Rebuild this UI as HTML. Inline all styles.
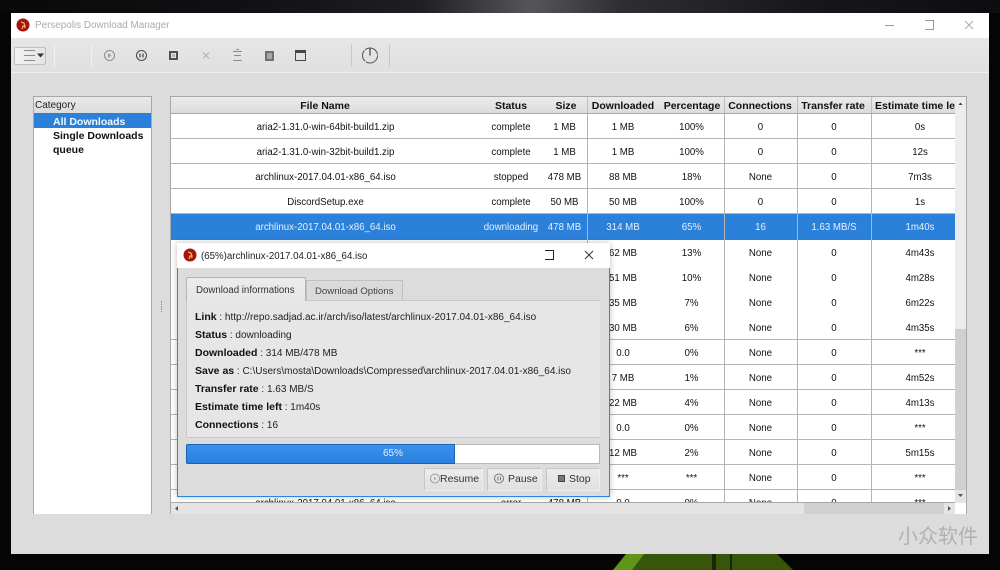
<!DOCTYPE html>
<html><head><meta charset="utf-8">
<style>
html,body{margin:0;padding:0}
body{width:1000px;height:570px;overflow:hidden;position:relative;background:#050506;font-family:"Liberation Sans","Noto Sans CJK SC",sans-serif;font-size:10px;color:#111}
.a{position:absolute;box-sizing:border-box}
.t{position:absolute;white-space:nowrap;line-height:14px}
table{border-collapse:separate;border-spacing:0;table-layout:fixed;position:absolute;left:0;top:0;width:798px}
td{height:25px;padding:3px 0 0;text-align:center;vertical-align:top;white-space:nowrap;overflow:hidden;box-sizing:border-box;border-bottom:1px solid #b4b4b4;line-height:21px;font-size:9.7px}
tr.n td{border-bottom:0}
tr.s td{background:#2b80d9;color:#e8f0fa;border-bottom:0;height:26px}
.v{position:absolute;top:0;width:1px;background:#b4b4b4}
.h{position:absolute;top:98px;font-weight:bold;font-size:10.5px;line-height:15px;white-space:nowrap;transform:translateX(-50%);color:#111}
.sep{position:absolute;top:44px;width:1px;height:23px;background:#f2f2f2}
.l{position:absolute;left:195px;white-space:nowrap;line-height:14px;font-size:10px;color:#222}
.l b{color:#111;font-size:10.5px}
.btn{position:absolute;top:468px;height:23px;background:linear-gradient(#ececec,#e0e0e0);border:1px solid #c6c6c6;border-bottom-color:#eee;border-right-color:#eee;box-sizing:border-box;text-align:left;line-height:21px;font-size:10.5px;color:#333}
</style></head><body>

<!-- backdrop -->
<div class="a" style="left:0;top:0;width:1000px;height:13px;background:linear-gradient(90deg,#08090a 0,#101114 25%,#1d1f22 42%,#55565c 53%,#2d2f33 62%,#16181b 80%,#0c0d10 100%)"></div>
<svg class="a" style="left:560px;top:554px" width="300" height="16"><polygon points="53,16 67,0 217,0 233,16" fill="#37560c"/><polygon points="53,16 66,0 84,0 72,16" fill="#5f9519"/><rect x="152" y="0" width="4" height="16" fill="#1c2508"/><rect x="170" y="0" width="2" height="16" fill="#1c2508"/></svg>

<!-- main window -->
<div class="a" style="left:11px;top:13px;width:978px;height:541px;background:#dcdcdc"></div>
<div class="a" style="left:11px;top:13px;width:978px;height:25px;background:#fff"></div>
<div class="a" style="left:11px;top:38px;width:978px;height:35px;background:linear-gradient(#e6e6e6,#e0e0e0);border-bottom:1px solid #efefef"></div>

<svg class="a" style="left:16px;top:18px" width="14" height="14"><circle cx="7" cy="7" r="6.5" fill="#a5140f"/><path d="M5 4l3 1 1 3-2 0-1 3M8 8l1 2" stroke="#e8b060" stroke-width="1.3" fill="none"/></svg>
<div class="t" style="left:35px;top:19px;color:#a3adb4;font-size:9.9px">Persepolis Download Manager</div>

<svg class="a" style="left:880px;top:17px" width="100" height="16"><path d="M5 8.5h9" stroke="#999"/><path d="M45 3.5h8.500v9H45" stroke="#999" fill="none"/><path d="M85 4l8 8M93 4l-8 8" stroke="#aaa" fill="none"/></svg>

<!-- toolbar -->
<div class="a" style="left:14px;top:47px;width:32px;height:18px;background:linear-gradient(90deg,#f2f2f2,#e4e4e4);border:1px solid #c0c0c0;border-radius:2px"></div>
<svg class="a" style="left:14px;top:47px" width="400" height="20">
<path d="M10 3.500h11M10 8.500h11M10 13.500h11" stroke="#8b8b8b"/>
<path d="M23 6.500h7l-3.500 4z" fill="#333"/>
</svg>
<div class="sep" style="left:54px"></div><div class="sep" style="left:91px"></div>
<svg class="a" style="left:100px;top:44px" width="300" height="24">
<circle cx="9.500" cy="11.500" r="5" fill="none" stroke="#8f8f8f"/><path d="M8 9l3.500 2.500L8 14z" fill="#999"/>
<circle cx="41.500" cy="11.500" r="5" fill="none" stroke="#4c4f56" stroke-width="1.100"/><path d="M40 9.500v4M43 9.500v4" stroke="#4c4f56" stroke-width="1.300"/>
<rect x="70" y="8" width="7" height="7" fill="none" stroke="#4b4e56" stroke-width="2"/><rect x="72" y="10" width="3" height="3" fill="#4b4e56" opacity=".3"/>
<path d="M103 8.500l6 6M109 8.500l-6 6" stroke="#b0b0b0"/>
<path d="M133 7.500h9M134 11.500h7M133 16.500h9M136 5.500h3" stroke="#8c8c8c"/>
<rect x="165" y="7" width="9" height="10" fill="#6e7078"/><path d="M167 10h5M167 12h5M167 14h5" stroke="#dcdcdc"/>
<rect x="195.500" y="6.500" width="10" height="10" fill="none" stroke="#44474e"/><rect x="195" y="6" width="11" height="3" fill="#44474e"/>
</svg>
<div class="sep" style="left:351px;background:#c8c8c8"></div><div class="sep" style="left:389px;background:#c8c8c8"></div>
<svg class="a" style="left:360px;top:45px" width="20" height="20"><circle cx="10" cy="10.500" r="7.500" fill="none" stroke="#555" stroke-dasharray="16 1 12 1"/><path d="M10 2.500v8" stroke="#444" stroke-width="1.200"/></svg>

<!-- category -->
<div class="a" style="left:33px;top:96px;width:119px;height:418px;background:#fff;border:1px solid #a8a8a8;border-bottom:0"></div>
<div class="a" style="left:34px;top:97px;width:117px;height:16px;background:linear-gradient(#eaeaea,#dcdcdc)"></div>
<div class="t" style="left:35px;top:99px;color:#222;font-size:10px">Category</div>
<div class="a" style="left:34px;top:113px;width:117px;height:15px;background:#2b80d9"></div>
<div class="t" style="left:53px;top:115px;color:#f4f8fd;font-weight:bold;font-size:10.500px">All Downloads</div>
<div class="t" style="left:53px;top:129px;font-weight:bold;font-size:10.500px">Single Downloads</div>
<div class="t" style="left:53px;top:143px;font-weight:bold;font-size:10.500px">queue</div>

<!-- splitter -->
<svg class="a" style="left:160px;top:300px" width="3" height="13"><path d="M1.500 1v11" stroke="#8d8d8d" stroke-dasharray="1.500 1"/></svg>

<!-- table -->
<div class="a" style="left:170px;top:96px;width:797px;height:418px;border:1px solid #a8a8a8;border-bottom:0;background:#fff"></div>
<div class="a" style="left:171px;top:97px;width:784px;height:17px;background:linear-gradient(#ececec,#dcdcdc);border-bottom:1px solid #a8a8a8"></div>
<div class="a" style="left:587px;top:97px;width:1px;height:16px;background:#bdbdbd"></div>
<div class="a" style="left:724px;top:97px;width:1px;height:16px;background:#bdbdbd"></div>
<div class="a" style="left:797px;top:97px;width:1px;height:16px;background:#bdbdbd"></div>
<div class="a" style="left:871px;top:97px;width:1px;height:16px;background:#bdbdbd"></div>
<div class="h" style="left:325px;top:98.500px">File Name</div>
<div class="h" style="left:511px;top:98.500px">Status</div>
<div class="h" style="left:566px;top:98.500px">Size</div>
<div class="h" style="left:623px;top:98.500px">Downloaded</div>
<div class="h" style="left:692px;top:98.500px">Percentage</div>
<div class="h" style="left:760px;top:98.500px">Connections</div>
<div class="h" style="left:833px;top:98.500px">Transfer rate</div>
<div class="a" style="left:875px;top:98.500px;width:80px;height:15px;overflow:hidden;font-weight:bold;font-size:10.500px;line-height:15px;white-space:nowrap;color:#111">Estimate time left</div>

<div class="a" style="left:171px;top:114px;width:784px;height:388px;overflow:hidden;background:#fff">
<table>
<colgroup><col style="width:309px"><col style="width:62px"><col style="width:45px"><col style="width:72px"><col style="width:65px"><col style="width:73px"><col style="width:74px"><col style="width:98px"></colgroup>
<tr><td>aria2-1.31.0-win-64bit-build1.zip</td><td>complete</td><td>1 MB</td><td>1 MB</td><td>100%</td><td>0</td><td>0</td><td>0s</td></tr>
<tr><td>aria2-1.31.0-win-32bit-build1.zip</td><td>complete</td><td>1 MB</td><td>1 MB</td><td>100%</td><td>0</td><td>0</td><td>12s</td></tr>
<tr><td>archlinux-2017.04.01-x86_64.iso</td><td>stopped</td><td>478 MB</td><td>88 MB</td><td>18%</td><td>None</td><td>0</td><td>7m3s</td></tr>
<tr><td>DiscordSetup.exe</td><td>complete</td><td>50 MB</td><td>50 MB</td><td>100%</td><td>0</td><td>0</td><td>1s</td></tr>
<tr class="s"><td>archlinux-2017.04.01-x86_64.iso</td><td>downloading</td><td>478 MB</td><td>314 MB</td><td>65%</td><td>16</td><td>1.63 MB/S</td><td>1m40s</td></tr>
<tr class="n"><td></td><td></td><td></td><td>62 MB</td><td>13%</td><td>None</td><td>0</td><td>4m43s</td></tr>
<tr class="n"><td></td><td></td><td></td><td>51 MB</td><td>10%</td><td>None</td><td>0</td><td>4m28s</td></tr>
<tr class="n"><td></td><td></td><td></td><td>35 MB</td><td>7%</td><td>None</td><td>0</td><td>6m22s</td></tr>
<tr><td></td><td></td><td></td><td>30 MB</td><td>6%</td><td>None</td><td>0</td><td>4m35s</td></tr>
<tr><td></td><td></td><td></td><td>0.0</td><td>0%</td><td>None</td><td>0</td><td>***</td></tr>
<tr><td></td><td></td><td></td><td>7 MB</td><td>1%</td><td>None</td><td>0</td><td>4m52s</td></tr>
<tr><td></td><td></td><td></td><td>22 MB</td><td>4%</td><td>None</td><td>0</td><td>4m13s</td></tr>
<tr><td></td><td></td><td></td><td>0.0</td><td>0%</td><td>None</td><td>0</td><td>***</td></tr>
<tr><td></td><td></td><td></td><td>12 MB</td><td>2%</td><td>None</td><td>0</td><td>5m15s</td></tr>
<tr><td></td><td></td><td></td><td>***</td><td>***</td><td>None</td><td>0</td><td>***</td></tr>
<tr><td>archlinux-2017.04.01-x86_64.iso</td><td>error</td><td>478 MB</td><td>0.0</td><td>0%</td><td>None</td><td>0</td><td>***</td></tr>
</table>
<div class="v" style="left:416px;height:388px"></div>
<div class="v" style="left:553px;height:388px"></div>
<div class="v" style="left:626px;height:388px"></div>
<div class="v" style="left:700px;height:388px"></div>
</div>

<!-- scrollbars -->
<div class="a" style="left:955px;top:97px;width:11px;height:232px;background:#ececec"></div>
<div class="a" style="left:955px;top:329px;width:11px;height:161px;background:#d0d0d0"></div>
<div class="a" style="left:955px;top:490px;width:11px;height:13px;background:#e4e4e4"></div>
<svg class="a" style="left:955px;top:97px" width="11" height="405"><path d="M3.500 8l2-2.500 2 2.500z" fill="#444"/><path d="M3 397h5l-2.500 3z" fill="#555"/></svg>
<div class="a" style="left:171px;top:502px;width:784px;height:12px;background:#e4e4e4;border-top:1px solid #a8a8a8"></div>
<div class="a" style="left:804px;top:503px;width:140px;height:11px;background:#d0d0d0"></div>
<svg class="a" style="left:171px;top:503px" width="784" height="11"><path d="M7 3v5l-3-2.500z" fill="#555"/><path d="M777 3v5l3-2.500z" fill="#555"/></svg>

<!-- dialog -->
<div class="a" style="left:177px;top:243px;width:433px;height:254px;background:#dcdcdc;border:1px solid #2b86dc;border-top:0;box-shadow:0 0 6px rgba(0,0,0,.25)"></div>
<div class="a" style="left:177px;top:243px;width:433px;height:25px;background:#fff"></div>
<svg class="a" style="left:183px;top:248px" width="14" height="14"><circle cx="7" cy="7" r="6.500" fill="#a5140f"/><path d="M5 4l3 1 1 3-2 0-1 3M8 8l1 2" stroke="#e8b060" stroke-width="1.300" fill="none"/></svg>
<div class="t" style="left:201px;top:250px;color:#222;font-size:9.700px">(65%)archlinux-2017.04.01-x86_64.iso</div>
<svg class="a" style="left:540px;top:248px" width="60" height="14"><path d="M5 2.500h8.500v9H5" stroke="#222" fill="none"/><path d="M45 3l8 8M53 3l-8 8" stroke="#333" fill="none"/></svg>

<div class="a" style="left:186px;top:300px;width:414px;height:138px;background:#e6e6e6;border:1px solid #c8c8c8;border-right:0"></div>
<div class="a" style="left:186px;top:277px;width:120px;height:24px;background:linear-gradient(#ececec,#e6e6e6);border:1px solid #b4b4b4;border-bottom:0;border-radius:2px 2px 0 0"></div>
<div class="t" style="left:196px;top:284px;font-size:9.700px;color:#333">Download informations</div>
<div class="a" style="left:306px;top:280px;width:97px;height:20px;background:#dadada;border:1px solid #c0c0c0;border-bottom:0"></div>
<div class="t" style="left:315px;top:285px;font-size:9.600px;color:#444">Download Options</div>

<div class="l" style="top:310px"><b>Link</b> : http://repo.sadjad.ac.ir/arch/iso/latest/archlinux-2017.04.01-x86_64.iso</div>
<div class="l" style="top:328px"><b>Status</b> : downloading</div>
<div class="l" style="top:346px"><b>Downloaded</b> : 314 MB/478 MB</div>
<div class="l" style="top:364px"><b>Save as</b> : C:\Users\mosta\Downloads\Compressed\archlinux-2017.04.01-x86_64.iso</div>
<div class="l" style="top:382px"><b>Transfer rate</b> : 1.63 MB/S</div>
<div class="l" style="top:400px"><b>Estimate time left</b> : 1m40s</div>
<div class="l" style="top:418px"><b>Connections</b> : 16</div>

<div class="a" style="left:186px;top:444px;width:414px;height:20px;background:#fff;border:1px solid #b8b8b8"></div>
<div class="a" style="left:186px;top:444px;width:269px;height:20px;background:linear-gradient(#3a92ee,#2a80dc);border:1px solid #1c64b4;border-radius:2px 0 0 2px"></div>
<div class="t" style="left:186px;top:447px;width:414px;text-align:center;color:#e6f0fb;font-size:10px">65%</div>

<div class="btn" style="left:424px;width:59px;padding-left:15px">Resume</div>
<div class="btn" style="left:487px;width:55px;padding-left:20px">Pause</div>
<div class="btn" style="left:546px;width:54px;padding-left:22px">Stop</div>
<svg class="a" style="left:424px;top:468px" width="176" height="23">
<circle cx="11" cy="10.500" r="4.500" fill="none" stroke="#999"/><path d="M10 8.500l2.500 2-2.500 2z" fill="#aaa"/>
<circle cx="75" cy="10.500" r="4.500" fill="none" stroke="#777"/><path d="M74 8.500v4M76.500 8.500v4" stroke="#777"/>
<rect x="134.500" y="7.500" width="6" height="6" fill="#777" stroke="#444"/>
</svg>

<!-- watermark -->
<div class="t" style="left:898px;top:525px;font-size:20px;line-height:24px;color:#b0b0b0;font-family:'Liberation Sans','Noto Sans CJK SC',sans-serif">小众软件</div>
</body></html>
